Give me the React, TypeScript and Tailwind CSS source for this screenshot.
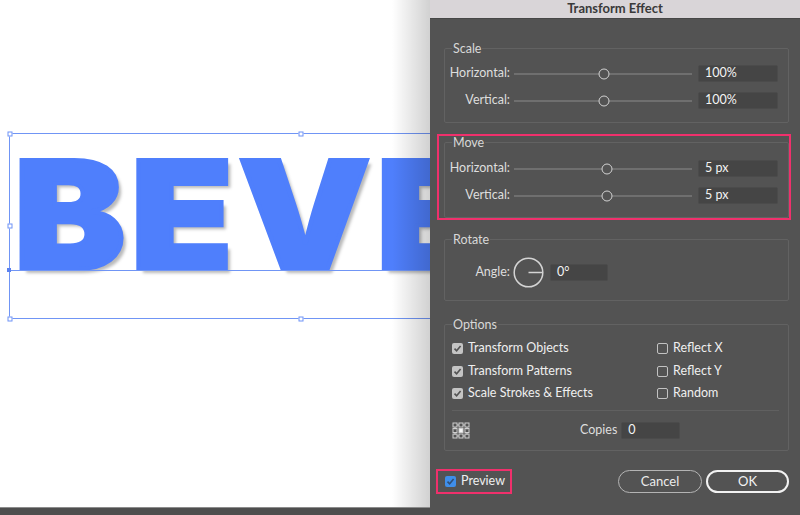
const FONT = "font-['Lato','Open_Sans',sans-serif]";

function Slider({ pos }: { pos: number }) {
  return (
    <div className="relative ml-[4px] flex h-[17px] w-[178px] items-center">
      <div className="h-[2px] w-full bg-[#6f6f6f]" />
      <div
        className="absolute top-1/2 h-[11px] w-[11px] -translate-x-1/2 -translate-y-1/2 rounded-full border-[1.5px] border-[#d2d2d2] bg-[#535353]"
        style={{ left: `${pos}px` }}
      />
    </div>
  );
}

function Field({ value, className = "" }: { value: string; className?: string }) {
  return (
    <div
      className={`flex items-center rounded-[2px] border border-[#4b4b4b] bg-[#454545] pl-[6px] text-[12.5px] text-[#f4f4f4] ${className}`}
    >
      {value}
    </div>
  );
}

function SliderRow({ label, pos, value }: { label: string; pos: number; value: string }) {
  return (
    <div className="flex h-[17px] items-center">
      <span className="w-[65px] text-right text-[12.5px] text-[#dedede]">{label}</span>
      <Slider pos={pos} />
      <Field value={value} className="ml-[6px] h-[17px] w-[80px]" />
    </div>
  );
}

function Group({ title, children, className = "" }: { title: string; children: React.ReactNode; className?: string }) {
  return (
    <fieldset className={`rounded-[2px] border border-[#626262] ${className}`}>
      <legend className="ml-[7px] px-px text-[12.5px] leading-[15px] text-[#d8d8d8]">{title}</legend>
      {children}
    </fieldset>
  );
}

function Check({ on, label }: { on: boolean; label: string }) {
  return (
    <div className="flex h-[17px] items-center">
      {on ? (
        <span className="flex h-[11px] w-[11px] items-center justify-center rounded-[2px] bg-[#c4c4c4]">
          <svg width="9" height="9" viewBox="0 0 9 9">
            <path d="M1.5 4.6 L3.6 6.8 L7.6 2" fill="none" stroke="#525252" strokeWidth="1.6" />
          </svg>
        </span>
      ) : (
        <span className="h-[11px] w-[11px] rounded-[2px] border border-[#c2c2c2]" />
      )}
      <span className="ml-[5px] text-[12.5px] text-[#efefef]">{label}</span>
    </div>
  );
}

function GridIcon() {
  return (
    <svg width="18" height="17" viewBox="0 0 18 17">
      {[0, 1, 2].map((r) =>
        [0, 1, 2].map((c) => (
          <rect
            key={`${r}-${c}`}
            x={1 + c * 6}
            y={1 + r * 5.5}
            width="4"
            height="4"
            fill={r === 1 && c === 1 ? "#f4f4f4" : "none"}
            stroke="#cfcfcf"
            strokeWidth="1"
          />
        ))
      )}
      <path d="M5 3h2M11 3h2M5 14h2M11 14h2M3 5v2.5M15 5v2.5M3 10.5v2.5M15 10.5v2.5" stroke="#cfcfcf" strokeWidth="1" />
    </svg>
  );
}

function Dial() {
  return (
    <svg width="31" height="31" viewBox="0 0 31 31" className="ml-[3px]">
      <circle cx="15.5" cy="15.5" r="14.3" fill="none" stroke="#d4d4d4" strokeWidth="1.5" />
      <path d="M15.5 15.5 H29.5" stroke="#d4d4d4" strokeWidth="1.5" />
    </svg>
  );
}

function Handle({ className }: { className: string }) {
  return <div className={`absolute h-[5px] w-[5px] -translate-x-1/2 -translate-y-1/2 border border-[#6f93f7] bg-white ${className}`} />;
}

function Canvas() {
  return (
    <div className="flex w-[430px] flex-col">
      <div className="relative flex-1 overflow-hidden bg-white">
        <div className="absolute left-[14px] top-[140px] origin-left scale-x-[1.11] whitespace-nowrap font-['Inter',sans-serif] text-[150px] font-black leading-none tracking-[5px] text-[#4f7ffc] [-webkit-text-stroke:4px_#4f7ffc] [text-shadow:4px_4px_3px_rgba(0,0,0,0.28)]">
          BEVE
        </div>
        {/* selection bounds */}
        <div className="absolute left-[9px] top-[133px] h-[186px] w-[440px] border border-[#7095f5]" />
        <div className="absolute left-[9px] top-[270px] h-px w-[430px] bg-[#7095f5]" />
        <div className="absolute left-[7px] top-[268px] h-[4px] w-[4px] bg-[#5c82ef]" />
        <Handle className="left-[9.5px] top-[133.5px]" />
        <Handle className="left-[300.5px] top-[133.5px]" />
        <Handle className="left-[9.5px] top-[226px]" />
        <Handle className="left-[9.5px] top-[318.5px]" />
        <Handle className="left-[300.5px] top-[318.5px]" />
        <div className="absolute inset-y-0 right-0 w-[38px] bg-gradient-to-r from-transparent to-black/18" />
      </div>
      <div className="h-px bg-[#8c8c8c]" />
      <div className="h-[7px] bg-[#4e4e4e]" />
    </div>
  );
}

export default function App() {
  return (
    <div className={`flex h-[515px] w-[800px] overflow-hidden ${FONT}`}>
      <Canvas />
      <div className="flex w-[370px] flex-col bg-[#535353]">
        <div className="flex h-[19px] items-center justify-center border-b border-[#474747] bg-[#d9d5d8] text-[13px] font-bold text-[#3a3a3a]">
          Transform Effect
        </div>
        <div className="flex flex-1 flex-col pl-[14px] pr-[11px] pt-[22px]">
          <Group title="Scale">
            <div className="flex flex-col gap-[10px] pb-[13px] pt-[9px]">
              <SliderRow label="Horizontal:" pos={90} value="100%" />
              <SliderRow label="Vertical:" pos={90} value="100%" />
            </div>
          </Group>

          <div className="-ml-[7px] -mr-[2px] mt-[11px] border-2 border-[#f0306c] pl-[5px]">
            <Group title="Move" className="-mt-[1px]">
              <div className="flex flex-col gap-[10px] pb-[13px] pt-[10px]">
                <SliderRow label="Horizontal:" pos={93} value="5 px" />
                <SliderRow label="Vertical:" pos={93} value="5 px" />
              </div>
            </Group>
          </div>

          <Group title="Rotate" className="mt-[12px]">
            <div className="mb-[12px] mt-[10px] flex h-[31px] items-center">
              <span className="w-[65px] text-right text-[12.5px] text-[#dedede]">Angle:</span>
              <Dial />
              <Field value="0°" className="ml-[6px] h-[17px] w-[58px]" />
            </div>
          </Group>

          <Group title="Options" className="mt-[16px]">
            <div className="flex pl-[7px] pt-[8px]">
              <div className="flex w-[205px] flex-col gap-[5.5px]">
                <Check on label="Transform Objects" />
                <Check on label="Transform Patterns" />
                <Check on label="Scale Strokes & Effects" />
              </div>
              <div className="flex flex-col gap-[5.5px]">
                <Check on={false} label="Reflect X" />
                <Check on={false} label="Reflect Y" />
                <Check on={false} label="Random" />
              </div>
            </div>
            <div className="ml-[7px] mr-[9px] mt-[8px] h-px bg-[#606060]" />
            <div className="mb-[11px] mt-[11px] flex h-[17px] items-center pl-[7px]">
              <GridIcon />
              <span className="ml-[110px] text-[12.5px] text-[#dedede]">Copies</span>
              <Field value="0" className="ml-[4px] h-[17px] w-[59px]" />
            </div>
          </Group>

          <div className="mt-[18px] flex items-center">
            <div className="-ml-[8px] flex h-[25px] w-[76px] items-center border-2 border-[#f0306c] pl-[7px]">
              <span className="flex h-[11px] w-[11px] items-center justify-center rounded-[2px] bg-[#3f8ee9]">
                <svg width="9" height="9" viewBox="0 0 9 9">
                  <path d="M1.5 4.6 L3.6 6.8 L7.6 2" fill="none" stroke="#2f4f78" strokeWidth="1.6" />
                </svg>
              </span>
              <span className="ml-[5px] text-[12.5px] text-[#efefef]">Preview</span>
            </div>
            <div className="ml-auto flex gap-[4px]">
              <button className="flex h-[23px] w-[84px] items-center justify-center rounded-full border-[1.5px] border-[#b4b4b4] text-[13px] text-[#ececec]">
                Cancel
              </button>
              <button className="flex h-[23px] w-[83px] items-center justify-center rounded-full border-2 border-[#f2f2f2] text-[13px] text-[#f2f2f2]">
                OK
              </button>
            </div>
          </div>
        </div>
      </div>
    </div>
  );
}
